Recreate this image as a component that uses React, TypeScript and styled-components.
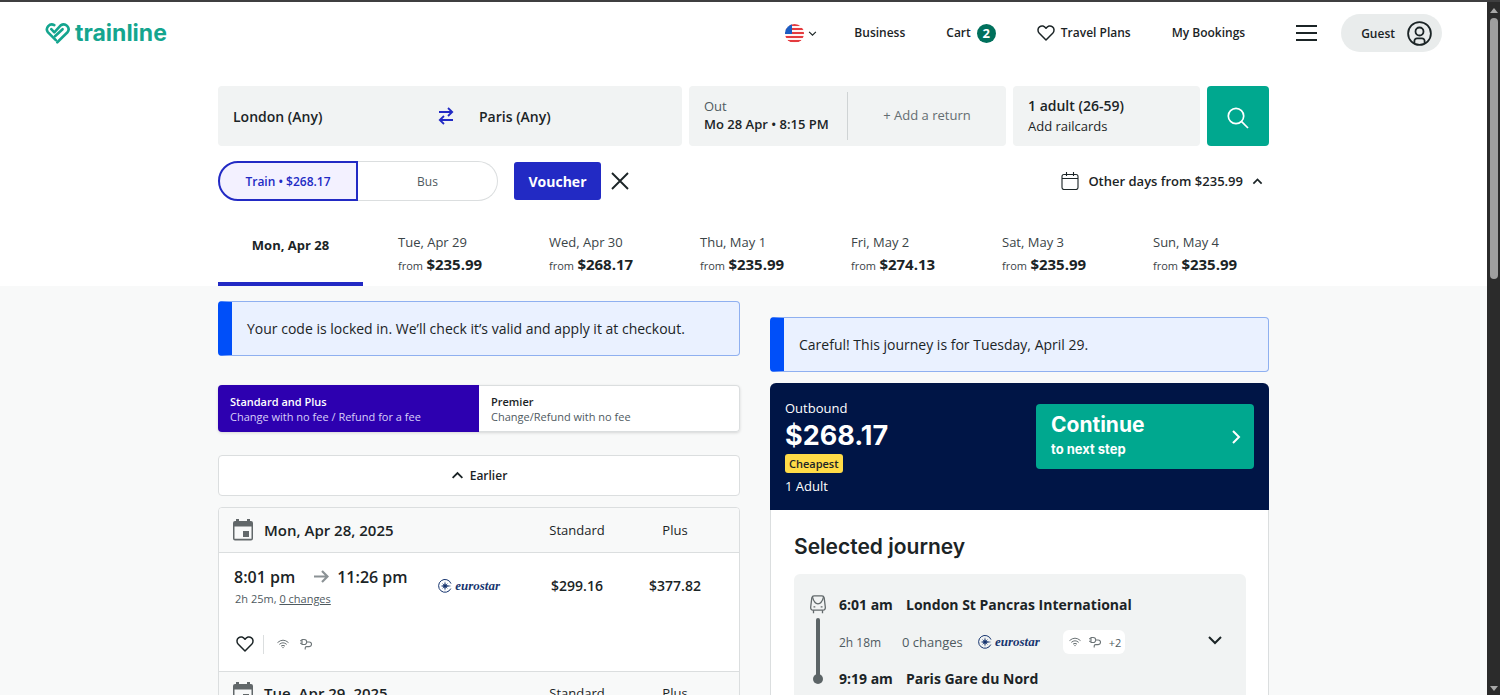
import React from "react";
import styled, { createGlobalStyle, css } from "styled-components";

const ink = "#1b2426";
const inkSoft = "#4f5a5f";
const line = "#dbdedf";
const mist = "#f1f3f3";
const green = "#00a88f";
const royal = "#222ac4";
const navy = "#001546";

const GlobalStyle = createGlobalStyle`
  *, *::before, *::after { box-sizing: border-box; }
  body { margin: 0; background: #f8f9f9; }
  body, button, input { font-family: "Open Sans", "Noto Sans", sans-serif; color: ${ink}; }
  button { border: 0; background: none; padding: 0; cursor: pointer; }
  a { color: inherit; text-decoration: none; }
  h2, p { margin: 0; }
  svg { display: block; flex: none; }
`;

const Shell = styled.div`
  display: grid;
  grid-template-columns: minmax(0, 1fr) 13px;
  height: 100vh;
  overflow: hidden;
  border-top: 2px solid #3f3f40;
`;

const Page = styled.div`
  min-width: 0;
  overflow: hidden;
`;

const ScrollTrack = styled.div`
  display: flex;
  flex-direction: column;
  align-items: center;
  gap: 5px;
  padding-top: 6px;
  background: #2b2b2b;
`;

const ScrollThumb = styled.div`
  width: 8px;
  height: 38%;
  border-radius: 4px;
  background: #9f9f9f;
`;

const ScrollEnd = styled.div`
  margin-top: auto;
  padding-bottom: 4px;
`;

const Top = styled.div`
  background: #fff;
`;

const Header = styled.header`
  display: flex;
  align-items: center;
  justify-content: space-between;
  height: 62px;
  padding: 0 45px;
`;

const Logo = styled.a`
  display: flex;
  align-items: center;
  gap: 5px;
  color: #14a58f;
  font: 700 23px/28px Inter, sans-serif;
`;

const Nav = styled.nav`
  display: flex;
  align-items: center;
  gap: 41px;
  font-size: 12px;
  line-height: 20px;
  font-weight: 600;
`;

const NavLink = styled.a`
  display: flex;
  align-items: center;
  gap: 6px;
`;

const LanguageButton = styled.button`
  display: flex;
  align-items: center;
  gap: 4px;
  margin-right: -4px;
`;

const CartCount = styled.span`
  display: grid;
  place-items: center;
  width: 19px;
  height: 19px;
  border-radius: 50%;
  background: #00705c;
  color: #fff;
  font-size: 13px;
  line-height: 18px;
  font-weight: 700;
`;

const AccountGroup = styled.div`
  display: flex;
  align-items: center;
  gap: 24px;
  padding-left: 10px;
`;

const GuestButton = styled.button`
  display: flex;
  align-items: center;
  gap: 12px;
  height: 38px;
  padding: 0 10px 0 20px;
  border-radius: 19px;
  background: #e9ecec;
  font-size: 12px;
  font-weight: 600;
`;

const Container = styled.div`
  width: 100%;
  max-width: 1051px;
  margin: 0 auto;
`;

const SearchForm = styled.form`
  display: grid;
  grid-template-columns: 464fr 317fr 187fr 62px;
  gap: 7px;
  height: 60px;
  margin-top: 22px;
`;

const SearchField = styled.div`
  display: flex;
  align-items: center;
  min-width: 0;
  border-radius: 4px;
  background: ${mist};
`;

const StationsField = styled(SearchField)`
  display: grid;
  grid-template-columns: 220fr 26px 218fr;
`;

const StationInput = styled.input`
  min-width: 0;
  height: 100%;
  padding: 0 15px;
  border: 0;
  outline: 0;
  background: transparent;
  font-size: 14px;
  font-weight: 600;
`;

const FieldButton = styled.button`
  display: flex;
  flex-direction: column;
  justify-content: center;
  height: 100%;
  padding: 0 15px 2px;
  text-align: left;
  font-size: 13px;
  line-height: 18px;
`;

const OutButton = styled(FieldButton)`
  flex: 1;
  color: ${inkSoft};
  white-space: nowrap;
  strong { color: ${ink}; font-weight: 600; }
`;

const ReturnButton = styled(FieldButton)`
  flex: 1;
  align-items: center;
  height: 48px;
  border-left: 1px solid #cfd3d4;
  color: #646d71;
`;

const PassengerButton = styled(FieldButton)`
  width: 100%;
  padding-bottom: 0;
  line-height: 20px;
  strong { font-size: 14px; font-weight: 600; }
`;

const SearchButton = styled.button`
  display: grid;
  place-items: center;
  padding-top: 4px;
  border-radius: 4px;
  background: ${green};
`;

const Filters = styled.div`
  display: flex;
  align-items: center;
  height: 40px;
  margin-top: 15px;
`;

const ModeButton = styled.button<{ $active?: boolean }>`
  width: 140px;
  height: 40px;
  font-size: 12px;
  ${({ $active }) =>
    $active
      ? css`
          border: 2px solid ${royal};
          border-radius: 20px 0 0 20px;
          background: #f3f1ff;
          color: ${royal};
          font-weight: 600;
        `
      : css`
          border: 1px solid ${line};
          border-left: 0;
          border-radius: 0 20px 20px 0;
          color: ${inkSoft};
        `}
`;

const VoucherButton = styled.button`
  width: 87px;
  height: 38px;
  margin: 0 9px 0 16px;
  border-radius: 3px;
  background: ${royal};
  color: #fff;
  font-size: 14px;
  font-weight: 700;
`;

const OtherDays = styled.button`
  display: flex;
  align-items: center;
  gap: 9px;
  margin-left: auto;
  padding-right: 6px;
  font-size: 13px;
  font-weight: 600;
`;

const DayTabs = styled.div`
  display: grid;
  grid-template-columns: repeat(7, minmax(0, 1fr));
  gap: 6px;
  margin-top: 26px;
`;

const DayTab = styled.button<{ $active?: boolean }>`
  display: flex;
  flex-direction: column;
  align-items: flex-start;
  height: 59px;
  padding: 4px 0 0 29px;
  border-bottom: 4px solid transparent;
  font-size: 13px;
  line-height: 22px;
  white-space: nowrap;
  color: #3a4447;
  small { font-size: 11px; }
  strong { font-size: 15px; font-weight: 700; color: ${ink}; }
  ${({ $active }) =>
    $active &&
    css`
      align-items: center;
      padding: 7px 0 0;
      border-radius: 3px 3px 0 0;
      border-color: ${royal};
      color: ${ink};
      font-weight: 700;
    `}
`;

const Main = styled.main`
  display: grid;
  grid-template-columns: 522fr 499fr;
  gap: 30px;
  align-items: start;
  padding-top: 15px;
`;

const Notice = styled.p`
  padding: 1px 15px 0;
  border: 1px solid #8fb0f0;
  border-left: 14px solid #004ff9;
  border-radius: 4px;
  background: #eaf1ff;
  font-size: 14px;
  line-height: 52px;
  white-space: nowrap;
`;

const ClassToggle = styled.div`
  display: grid;
  grid-template-columns: 1fr 1fr;
  height: 47px;
  margin-top: 29px;
  border-radius: 4px;
  overflow: hidden;
  background: #fff;
  box-shadow: inset 0 0 0 1px ${line}, 0 1px 3px rgba(0, 0, 0, 0.14);
`;

const ClassButton = styled.button<{ $active?: boolean }>`
  display: flex;
  flex-direction: column;
  justify-content: center;
  padding: 0 12px;
  font-size: 11px;
  line-height: 15px;
  text-align: left;
  white-space: nowrap;
  background: ${({ $active }) => ($active ? "#2d00b0" : "transparent")};
  color: ${({ $active }) => ($active ? "#d8cff8" : inkSoft)};
  strong { font-weight: 600; color: ${({ $active }) => ($active ? "#fff" : ink)}; }
`;

const EarlierButton = styled.button`
  display: flex;
  align-items: center;
  justify-content: center;
  gap: 6px;
  width: 100%;
  height: 41px;
  margin-top: 23px;
  border: 1px solid ${line};
  border-radius: 4px;
  background: #fff;
  font-size: 12px;
  font-weight: 600;
`;

const ResultsCard = styled.div`
  margin-top: 11px;
  border: 1px solid ${line};
  border-radius: 4px;
  overflow: hidden;
  background: #fff;
`;

const ResultsTable = styled.table`
  width: 100%;
  border-collapse: collapse;
  table-layout: fixed;
  th, td { padding: 0; }
`;

const DateRow = styled.tr`
  height: 44px;
  border-bottom: 1px solid ${line};
  background: #f8f9f9;
  font-size: 13px;
  th { font-weight: 500; }
`;

const DateHeading = styled.div`
  display: flex;
  align-items: center;
  gap: 11px;
  padding-left: 14px;
  font-size: 15px;
  line-height: 20px;
  font-weight: 600;
`;

const JourneyRow = styled.tr`
  height: 119px;
  border-bottom: 1px solid ${line};
  vertical-align: top;
`;

const PriceCell = styled.td`
  text-align: center;
  button {
    margin-top: 23px;
    font-size: 14px;
    line-height: 20px;
    font-weight: 600;
  }
`;

const Journey = styled.div`
  display: flex;
  justify-content: space-between;
  padding: 13px 28px 0 15px;
`;

const JourneyTimes = styled.div`
  display: flex;
  align-items: center;
  font-size: 16px;
  line-height: 22px;
  font-weight: 600;
  white-space: nowrap;
  svg { margin: 0 8px 0 19px; }
`;

const JourneyMeta = styled.p`
  padding: 2px 0 0 1px;
  font-size: 11px;
  line-height: 18px;
  color: ${inkSoft};
  a { text-decoration: underline; }
`;

const EurostarMark = styled.span`
  display: flex;
  align-items: center;
  gap: 3px;
  height: 14px;
  color: #17356f;
  font: italic 700 13px/14px "Liberation Serif", serif;
`;

const JourneyBrand = styled.div`
  padding-top: 13px;
`;

const JourneyTools = styled.div`
  display: flex;
  align-items: center;
  height: 19px;
  margin: 27px 0 0 17px;
`;

const ToolIcons = styled.div`
  display: flex;
  align-items: center;
  gap: 11px;
  height: 19px;
  margin-left: 9px;
  padding-left: 13px;
  border-left: 1px solid ${line};
`;

const Summary = styled.aside`
  padding-top: 16px;
`;

const SummaryCard = styled.section`
  margin-top: 11px;
  border: 1px solid ${line};
  border-top: 0;
  border-radius: 6px 6px 0 0;
  background: #fff;
`;

const SummaryHead = styled.div`
  display: flex;
  justify-content: space-between;
  align-items: flex-start;
  height: 127px;
  margin: 0 -1px;
  padding: 15px 15px 0;
  border-radius: 6px 6px 0 0;
  background: ${navy};
  color: #fff;
  font-size: 13px;
  line-height: 20px;
`;

const TotalPrice = styled.p`
  font: 700 27px/36px Inter, sans-serif;
`;

const CheapBadge = styled.span`
  display: block;
  width: max-content;
  margin-bottom: 3px;
  padding: 0 4px;
  border-radius: 3px;
  background: #ffdb47;
  color: ${ink};
  font-size: 11px;
  line-height: 19px;
  font-weight: 600;
`;

const ContinueButton = styled.button`
  display: flex;
  align-items: center;
  justify-content: space-between;
  width: 218px;
  height: 65px;
  margin-top: 6px;
  padding: 0 10px 0 15px;
  border-radius: 4px;
  background: ${green};
  color: #fff;
  text-align: left;
  font: 700 13px/24px Inter, sans-serif;
`;

const ContinueTitle = styled.span`
  display: block;
  font-size: 21px;
`;

const JourneyTitle = styled.h2`
  padding: 23px 23px 0;
  font: 600 21px/28px Inter, sans-serif;
`;

const JourneyPanel = styled.div`
  display: grid;
  grid-template-columns: 16px minmax(0, 1fr) 16px;
  column-gap: 13px;
  height: 200px;
  margin: 13px 22px 0 23px;
  padding: 21px 23px 0 16px;
  border-radius: 6px;
  background: ${mist};
`;

const RouteLine = styled.div`
  display: flex;
  flex-direction: column;
  align-items: center;
  height: 89px;
`;

const RouteStem = styled.div`
  flex: 1;
  width: 4px;
  margin-top: 4px;
  border-radius: 2px 2px 0 0;
  background: #5c6466;
`;

const RouteStop = styled.div`
  width: 10px;
  height: 10px;
  margin-top: -2px;
  border-radius: 50%;
  background: #5c6466;
`;

const Stop = styled.div`
  display: grid;
  grid-template-columns: 67px 1fr;
  font-size: 14px;
  line-height: 20px;
  font-weight: 700;
  white-space: nowrap;
`;

const StopDetails = styled.div`
  display: flex;
  align-items: center;
  height: 54px;
  font-size: 12px;
  color: ${inkSoft};
  white-space: nowrap;
  span { flex: none; }
`;

const Duration = styled.span`
  width: 63px;
`;

const Changes = styled.span`
  width: 76px;
  font-size: 13px;
`;

const Amenities = styled.span`
  display: flex;
  align-items: center;
  gap: 8px;
  height: 24px;
  margin-left: 23px;
  padding: 0 4px 0 6px;
  border-radius: 6px;
  background: #fff;
  font-size: 11px;
`;

const ExpandButton = styled.button`
  align-self: start;
  margin-top: 37px;
`;

type ChevronProps = { dir: "up" | "down" | "right"; size: number; weight?: number };

const chevronPaths = { up: "M2 11 8 5l6 6", down: "M2 5l6 6 6-6", right: "M5 2l6 6-6 6" };

const Chevron = ({ dir, size, weight = 2 }: ChevronProps) => (
  <svg width={size} height={size} viewBox="0 0 16 16" fill="none" stroke="currentColor" strokeWidth={weight} aria-hidden="true">
    <path d={chevronPaths[dir]} />
  </svg>
);

const TrainlineIcon = () => (
  <svg width="25" height="22" viewBox="0 0 25 22" fill="none" stroke="currentColor" strokeWidth="2.6" strokeLinecap="round" strokeLinejoin="round" aria-hidden="true">
    <path d="M10.800 18.200 2.800 10.100A4.900 4.900 0 0 1 9.300 3.100" />
    <path d="M6.300 7.200 9.300 10.300 15.700 3.400A4.900 4.900 0 0 1 22.500 10.300L12.300 20.300" />
    <path d="M10 14.300 17.600 7.200" />
  </svg>
);

const FlagIcon = () => (
  <svg width="19" height="19" viewBox="0 0 19 19" aria-hidden="true">
    <clipPath id="flag-round"><circle cx="9.5" cy="9.5" r="9.5" /></clipPath>
    <g clipPath="url(#flag-round)">
      <rect width="19" height="19" fill="#fff4f3" />
      {[0, 4, 8, 12, 16].map((y) => <rect key={y} y={y} width="19" height="2" fill="#e43b3f" />)}
      <rect width="7" height="10" fill="#1a5dc4" />
    </g>
  </svg>
);

const HeartIcon = ({ size }: { size: number }) => (
  <svg width={size} height={size} viewBox="0 0 18 18" fill="none" stroke="currentColor" strokeWidth="1.5" strokeLinejoin="round" aria-hidden="true">
    <path d="M9 16 2.3 9.3C.4 7.3.6 4.3 2.5 2.8 4.7 1.1 7.4 1.9 9 4.3c1.6-2.4 4.3-3.2 6.5-1.5 1.9 1.5 2.1 4.5.2 6.5Z" />
  </svg>
);

const PersonIcon = () => (
  <svg width="25" height="25" viewBox="0 0 25 25" fill="none" stroke="currentColor" strokeWidth="1.8" aria-hidden="true">
    <circle cx="12.5" cy="12.5" r="11.4" />
    <circle cx="12.5" cy="10.5" r="4" />
    <path d="M7.4 22.3v-2.3a2.6 2.6 0 0 1 2.6-2.6h5a2.6 2.6 0 0 1 2.6 2.6v2.3" />
  </svg>
);

const MenuIcon = () => (
  <svg width="21" height="16" viewBox="0 0 21 16" stroke="currentColor" strokeWidth="2" aria-hidden="true">
    <path d="M0 1h21M0 8h21M0 15h21" />
  </svg>
);

const SwapIcon = () => (
  <svg width="16" height="18" viewBox="0 0 16 18" fill="none" stroke={royal} strokeWidth="1.8" aria-hidden="true">
    <path d="M1 5h13M10 1l4.2 4L10 9M15 13H2M6 9l-4.2 4L6 17" />
  </svg>
);

const SearchIcon = () => (
  <svg width="22" height="22" viewBox="0 0 22 22" fill="none" stroke="#fff" strokeWidth="1.7" aria-hidden="true">
    <circle cx="9" cy="9" r="7.7" />
    <path d="m14.6 14.6 6.4 6.4" />
  </svg>
);

const CloseIcon = () => (
  <svg width="20" height="20" viewBox="0 0 20 20" stroke="currentColor" strokeWidth="1.9" aria-hidden="true">
    <path d="m2 2 16 16M18 2 2 18" />
  </svg>
);

const CalendarIcon = () => (
  <svg width="18" height="18" viewBox="0 0 18 18" fill="none" stroke="currentColor" strokeWidth="1.1" aria-hidden="true">
    <rect x="1" y="2.5" width="16" height="15" rx="2" />
    <path d="M1 6.5h16M5.5 0v4M12.5 0v4" />
  </svg>
);

const CalendarSolidIcon = () => (
  <svg width="20" height="22" viewBox="0 0 20 22" aria-hidden="true">
    <path fill="#62686a" fillRule="evenodd" d="M3 0h3v2h8V0h3v2h1a2 2 0 0 1 2 2v15.500a2 2 0 0 1-2 2H2a2 2 0 0 1-2-2V4a2 2 0 0 1 2-2h1ZM1.500 7.500v12.300h17V7.500ZM10 12h6v6h-6Z" />
  </svg>
);

const ArrowIcon = () => (
  <svg width="15" height="13" viewBox="0 0 15 13" fill="none" stroke="#8b9295" strokeWidth="2.200" aria-hidden="true">
    <path d="M0 6.500h13M8 1l5.500 5.500L8 12" />
  </svg>
);

const WifiIcon = () => (
  <svg width="12" height="10" viewBox="0 0 12 10" fill="none" stroke="#6b7376" strokeWidth="1" aria-hidden="true">
    <path d="M.5 3.600Q6-1.200 11.500 3.600M2.300 5.400Q6 2.200 9.700 5.400M4 7.100Q6 5.500 8 7.100" />
    <circle cx="6" cy="8.500" r=".7" fill="#6b7376" stroke="none" />
  </svg>
);

const PlugIcon = () => (
  <svg width="12" height="12" viewBox="0 0 12 12" fill="none" stroke="#6b7376" strokeWidth="1.100" aria-hidden="true">
    <path d="M2 1.500h2.200a2.300 2.300 0 0 1 0 5H2ZM0 2.800h2M0 5.200h2M6.600 4h2.600a2.100 2.100 0 0 1 0 4.600H6.500a1.300 1.300 0 0 0-1.300 1.300V11.500" />
  </svg>
);

const TrainIcon = () => (
  <svg width="16" height="19" viewBox="0 0 16 19" fill="none" stroke="#62696b" strokeWidth="1.300" aria-hidden="true">
    <path d="M4 .8h8c1.200 0 1.900.8 2.200 2L15.300 12c.2 1.900-.7 3.200-2.300 3.200H3C1.400 15.200.5 13.900.7 12L1.800 2.800C2.100 1.600 2.800.8 4 .8Z" />
    <path d="M2.500 2.200C3.500 6 5.500 8.800 8 8.800S12.500 6 13.500 2.200M3.500 15.200v3M12.500 15.200v3M3.500 11.800h1.800M10.700 11.800h1.800" />
  </svg>
);

const Eurostar = () => (
  <EurostarMark>
    <svg width="14" height="14" viewBox="0 0 14 14" fill="none" stroke="currentColor" aria-hidden="true">
      <path d="M13 4.600A6.400 6.400 0 1 0 12.800 9.600" />
      <path fill="currentColor" stroke="none" d="M7 2.200 7.900 6.100 13.400 7 7.900 7.900 7 11.800 6.100 7.900 2.600 7 6.100 6.100Z" />
      <path d="m4.600 4.600 4.800 4.800M9.400 4.600 4.600 9.400" strokeWidth=".8" />
    </svg>
    eurostar
  </EurostarMark>
);

const ScrollArrow = ({ down }: { down?: boolean }) => (
  <svg width="8" height="5" viewBox="0 0 8 5" fill="#a8a8a8" aria-hidden="true">
    <path d={down ? "M0 0h8L4 5Z" : "M0 5h8L4 0Z"} />
  </svg>
);

const days = [
  { label: "Tue, Apr 29", price: "$235.99" },
  { label: "Wed, Apr 30", price: "$268.17" },
  { label: "Thu, May 1", price: "$235.99" },
  { label: "Fri, May 2", price: "$274.13" },
  { label: "Sat, May 3", price: "$235.99" },
  { label: "Sun, May 4", price: "$235.99" },
];

const ResultsHeading = ({ date }: { date: string }) => (
  <DateRow>
    <th scope="col">
      <DateHeading><CalendarSolidIcon />{date}</DateHeading>
    </th>
    <th scope="col">Standard</th>
    <th scope="col">Plus</th>
    <td />
  </DateRow>
);

export default function App() {
  return (
    <>
      <GlobalStyle />
      <Shell>
        <Page>
          <Top>
            <Header>
              <Logo href="#"><TrainlineIcon />trainline</Logo>
              <Nav>
                <LanguageButton aria-label="Language and currency"><FlagIcon /><Chevron dir="down" size={9} weight={2} /></LanguageButton>
                <NavLink href="#">Business</NavLink>
                <NavLink href="#">Cart <CartCount>2</CartCount></NavLink>
                <NavLink href="#"><HeartIcon size={18} />Travel Plans</NavLink>
                <NavLink href="#">My Bookings</NavLink>
                <AccountGroup>
                  <button aria-label="Menu"><MenuIcon /></button>
                  <GuestButton>Guest <PersonIcon /></GuestButton>
                </AccountGroup>
              </Nav>
            </Header>
            <Container>
              <SearchForm onSubmit={(e) => e.preventDefault()}>
                <StationsField>
                  <StationInput aria-label="From" defaultValue="London (Any)" />
                  <button type="button" aria-label="Swap stations"><SwapIcon /></button>
                  <StationInput aria-label="To" defaultValue="Paris (Any)" />
                </StationsField>
                <SearchField>
                  <OutButton type="button">Out<strong>Mo 28 Apr • 8:15 PM</strong></OutButton>
                  <ReturnButton type="button">+ Add a return</ReturnButton>
                </SearchField>
                <SearchField>
                  <PassengerButton type="button"><strong>1 adult (26-59)</strong>Add railcards</PassengerButton>
                </SearchField>
                <SearchButton aria-label="Search"><SearchIcon /></SearchButton>
              </SearchForm>
              <Filters>
                <ModeButton $active aria-pressed="true">Train • $268.17</ModeButton>
                <ModeButton aria-pressed="false">Bus</ModeButton>
                <VoucherButton>Voucher</VoucherButton>
                <button aria-label="Remove voucher"><CloseIcon /></button>
                <OtherDays><CalendarIcon />Other days from $235.99<Chevron dir="up" size={11} weight={2.5} /></OtherDays>
              </Filters>
              <DayTabs>
                <DayTab $active aria-current="date">Mon, Apr 28</DayTab>
                {days.map((day) => (
                  <DayTab key={day.label}>
                    <span>{day.label}</span>
                    <span><small>from</small> <strong>{day.price}</strong></span>
                  </DayTab>
                ))}
              </DayTabs>
            </Container>
          </Top>
          <Container>
            <Main>
              <section>
                <Notice>Your code is locked in. We’ll check it’s valid and apply it at checkout.</Notice>
                <ClassToggle>
                  <ClassButton $active aria-pressed="true"><strong>Standard and Plus</strong>Change with no fee / Refund for a fee</ClassButton>
                  <ClassButton aria-pressed="false"><strong>Premier</strong>Change/Refund with no fee</ClassButton>
                </ClassToggle>
                <EarlierButton><Chevron dir="up" size={13} weight={2.2} />Earlier</EarlierButton>
                <ResultsCard>
                  <ResultsTable>
                    <colgroup>
                      <col />
                      <col width="98" />
                      <col width="98" />
                      <col width="15" />
                    </colgroup>
                    <tbody>
                      <ResultsHeading date="Mon, Apr 28, 2025" />
                      <JourneyRow>
                        <td>
                          <Journey>
                            <div>
                              <JourneyTimes>8:01 pm<ArrowIcon />11:26 pm</JourneyTimes>
                              <JourneyMeta>2h 25m, <a href="#">0 changes</a></JourneyMeta>
                            </div>
                            <JourneyBrand><Eurostar /></JourneyBrand>
                          </Journey>
                          <JourneyTools>
                            <button aria-label="Save journey"><HeartIcon size={18} /></button>
                            <ToolIcons><WifiIcon /><PlugIcon /></ToolIcons>
                          </JourneyTools>
                        </td>
                        <PriceCell><button>$299.16</button></PriceCell>
                        <PriceCell><button>$377.82</button></PriceCell>
                        <td />
                      </JourneyRow>
                      <ResultsHeading date="Tue, Apr 29, 2025" />
                    </tbody>
                  </ResultsTable>
                </ResultsCard>
              </section>
              <Summary>
                <Notice>Careful! This journey is for Tuesday, April 29.</Notice>
                <SummaryCard>
                  <SummaryHead>
                    <div>
                      <p>Outbound</p>
                      <TotalPrice>$268.17</TotalPrice>
                      <CheapBadge>Cheapest</CheapBadge>
                      <p>1 Adult</p>
                    </div>
                    <ContinueButton>
                      <span><ContinueTitle>Continue</ContinueTitle>to next step</span>
                      <Chevron dir="right" size={16} weight={2} />
                    </ContinueButton>
                  </SummaryHead>
                  <JourneyTitle>Selected journey</JourneyTitle>
                  <JourneyPanel>
                    <RouteLine><TrainIcon /><RouteStem /><RouteStop /></RouteLine>
                    <div>
                      <Stop><span>6:01 am</span><span>London St Pancras International</span></Stop>
                      <StopDetails>
                        <Duration>2h 18m</Duration>
                        <Changes>0 changes</Changes>
                        <Eurostar />
                        <Amenities><WifiIcon /><PlugIcon />+2</Amenities>
                      </StopDetails>
                      <Stop><span>9:19 am</span><span>Paris Gare du Nord</span></Stop>
                    </div>
                    <ExpandButton aria-label="Show journey details"><Chevron dir="down" size={16} weight={2} /></ExpandButton>
                  </JourneyPanel>
                </SummaryCard>
              </Summary>
            </Main>
          </Container>
        </Page>
        <ScrollTrack>
          <ScrollArrow />
          <ScrollThumb />
          <ScrollEnd><ScrollArrow down /></ScrollEnd>
        </ScrollTrack>
      </Shell>
    </>
  );
}
